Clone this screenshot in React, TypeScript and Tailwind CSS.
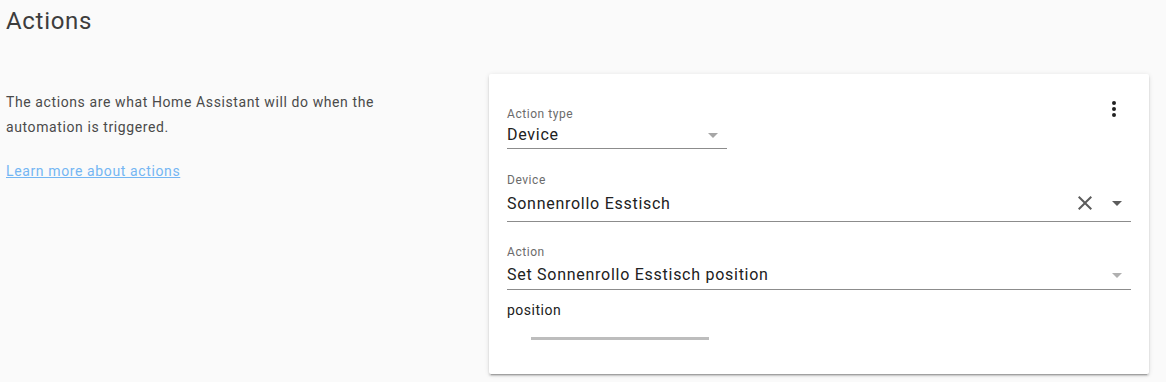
import React from "react";

function Arrow({ color }: { color: string }) {
  return (
    <svg width="10" height="5" viewBox="0 0 10 5" className="shrink-0">
      <path d="M0 0 L10 0 L5 5 Z" fill={color} />
    </svg>
  );
}

function Field({
  label,
  value,
  labelGap,
  height,
  arrowColor,
  clearable,
}: {
  label: string;
  value: string;
  labelGap: number;
  height: number;
  arrowColor: string;
  clearable?: boolean;
}) {
  return (
    <div>
      <div className="text-[12px] leading-4 tracking-[0.55px] text-[#6b6b6b]">{label}</div>
      <div
        className="flex items-start border-b border-[#8c8c8c]"
        style={{ height: height + 1, paddingTop: labelGap }}
      >
        <span className="flex-1 text-[16px] leading-6 tracking-[0.73px] text-[#212121]">{value}</span>
        {clearable && (
          <svg width="24" height="24" viewBox="0 0 24 24" className="mr-[15px] mt-[-1px]">
            <path
              d="M19,6.41L17.59,5L12,10.59L6.41,5L5,6.41L10.59,12L5,17.59L6.41,19L12,13.41L17.59,19L19,17.59L13.41,12L19,6.41Z"
              fill="#5c5c5c"
            />
          </svg>
        )}
        <div className="mr-[9px] flex h-6 items-center" style={{ marginTop: clearable ? -1 : 0 }}>
          <Arrow color={arrowColor} />
        </div>
      </div>
    </div>
  );
}

export default function App() {
  return (
    <div className="min-h-screen bg-[#fafafa] font-['Roboto',sans-serif]">
      <div className="pl-[6px] pt-[5px] text-[24px] leading-8 tracking-[0.7px] text-[#3d3d3d]">Actions</div>

      <div className="mt-[37px] flex">
        <div className="w-[489px] shrink-0 pl-[6px] pt-[16px]">
          <p className="w-[420px] text-[14px] leading-[25px] tracking-[0.6px] text-[#4a4a4a]">
            The actions are what Home Assistant will do when the automation is triggered.
          </p>
          <a
            href="#"
            className="mt-[19px] block text-[14px] leading-6 tracking-[0.62px] text-[#74b6f3] underline"
          >
            Learn more about actions
          </a>
        </div>

        <div className="relative h-[300px] w-[660px] rounded-[2px] bg-white px-[18px] pt-[32px] shadow-[0_2px_2px_0_rgba(0,0,0,0.14),0_1px_5px_0_rgba(0,0,0,0.12),0_3px_1px_-2px_rgba(0,0,0,0.2)]">
          <svg
            width="24"
            height="24"
            viewBox="0 0 24 24"
            className="absolute right-[23px] top-[23px]"
          >
            <path
              d="M12,16A2,2 0 0,1 14,18A2,2 0 0,1 12,20A2,2 0 0,1 10,18A2,2 0 0,1 12,16M12,10A2,2 0 0,1 14,12A2,2 0 0,1 12,14A2,2 0 0,1 10,12A2,2 0 0,1 12,10M12,4A2,2 0 0,1 14,6A2,2 0 0,1 12,8A2,2 0 0,1 10,6A2,2 0 0,1 12,4Z"
              fill="#212121"
            />
          </svg>

          <div className="w-[220px]">
            <Field label="Action type" value="Device" labelGap={1} height={26} arrowColor="#a6a6a6" />
          </div>

          <div className="mt-[23px]">
            <Field
              label="Device"
              value="Sonnenrollo Esstisch"
              labelGap={4}
              height={33}
              arrowColor="#5c5c5c"
              clearable
            />
          </div>

          <div className="mt-[22px]">
            <Field
              label="Action"
              value="Set Sonnenrollo Esstisch position"
              labelGap={3}
              height={29}
              arrowColor="#b0b0b0"
            />
          </div>

          <div className="mt-[10px] text-[14px] leading-5 tracking-[0.5px] text-[#212121]">position</div>
          <div className="ml-[24px] mt-[17px] h-[3px] w-[178px] bg-[#bdbdbd]" />
        </div>
      </div>
    </div>
  );
}
